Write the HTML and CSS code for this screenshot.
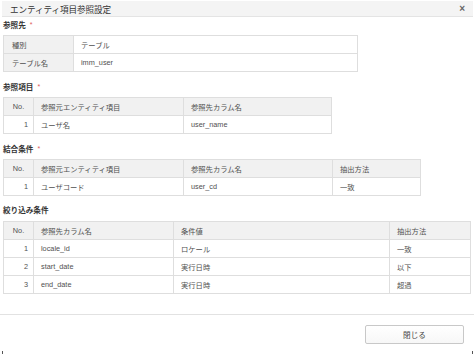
FILE: index.html
```html
<!DOCTYPE html>
<html lang="ja">
<head>
<meta charset="utf-8">
<title>エンティティ項目参照設定</title>
<link rel="stylesheet" href="styles.css">
</head>
<body>
<div class="dialog">
  <div class="titlebar">
    <span class="title">エンティティ項目参照設定</span>
    <span class="close">×</span>
  </div>
  <div class="content">
    <div class="section first">
      <div class="label">参照先<span class="req">*</span></div>
      <table class="grid t1">
        <colgroup><col class="c-lbl"><col></colgroup>
        <tr><th class="side">種別</th><td>テーブル</td></tr>
        <tr><th class="side">テーブル名</th><td>imm_user</td></tr>
      </table>
    </div>
    <div class="section">
      <div class="label">参照項目<span class="req">*</span></div>
      <table class="grid t2">
        <colgroup><col class="c-no"><col class="c-150"><col></colgroup>
        <tr class="head"><th class="no">No.</th><th>参照元エンティティ項目</th><th>参照先カラム名</th></tr>
        <tr><td class="num">1</td><td>ユーザ名</td><td>user_name</td></tr>
      </table>
    </div>
    <div class="section">
      <div class="label">結合条件<span class="req">*</span></div>
      <table class="grid t3">
        <colgroup><col class="c-no"><col class="c-150"><col class="c-149"><col></colgroup>
        <tr class="head"><th class="no">No.</th><th>参照元エンティティ項目</th><th>参照先カラム名</th><th>抽出方法</th></tr>
        <tr><td class="num">1</td><td>ユーザコード</td><td>user_cd</td><td>一致</td></tr>
      </table>
    </div>
    <div class="section">
      <div class="label">絞り込み条件</div>
      <table class="grid t4">
        <colgroup><col class="c-no"><col class="c-140"><col class="c-216"><col></colgroup>
        <tr class="head"><th class="no">No.</th><th>参照先カラム名</th><th>条件値</th><th>抽出方法</th></tr>
        <tr><td class="num">1</td><td>locale_id</td><td>ロケール</td><td>一致</td></tr>
        <tr><td class="num">2</td><td>start_date</td><td>実行日時</td><td>以下</td></tr>
        <tr><td class="num">3</td><td>end_date</td><td>実行日時</td><td>超過</td></tr>
      </table>
    </div>
  </div>
  <div class="footer">
    <button class="btn" type="button">閉じる</button>
  </div>
  <div class="edge"></div>
</div>
</body>
</html>
```

FILE: styles.css
```css
html, body {
  margin: 0;
  padding: 0;
  background: #ffffff;
}
body {
  font-family: "Liberation Sans", "Noto Sans CJK JP", sans-serif;
  color: #444;
  width: 474px;
  height: 354px;
  overflow: hidden;
}
.dialog {
  width: 474px;
}
.titlebar {
  margin: 1px 1px 0 2px;
  height: 15px;
  background: #f4f4f4;
  border-bottom: 1px solid #e4e4e4;
  display: flex;
  align-items: center;
  justify-content: space-between;
  padding: 0 8px 0 8px;
}
.title {
  font-size: 8.6px;
  color: #333;
  letter-spacing: -0.1px;
}
.close {
  font-size: 10px;
  color: #666;
  font-weight: bold;
  line-height: 1;
}
.content {
  padding: 0 3px;
}
.section {
  margin-top: 8px;
}
.section.first {
  margin-top: 1px;
}
.label {
  height: 14px;
  line-height: 14px;
  font-size: 7.6px;
  font-weight: bold;
  color: #333;
  margin-bottom: 3px;
}
.req {
  color: #e05a5a;
  font-weight: normal;
  font-size: 7px;
  margin-left: 4px;
  vertical-align: 1px;
}
.grid {
  border-collapse: collapse;
  table-layout: fixed;
  font-size: 7.3px;
  color: #505050;
}
.grid tr {
  height: 18px;
}
.grid th, .grid td {
  border: 1px solid #dedede;
  padding: 0 6px 0 7px;
  text-align: left;
  font-weight: normal;
  white-space: nowrap;
  overflow: hidden;
}
.grid th.side {
  background: #f1f1f1;
  padding-left: 8px;
}
.grid tr.head th {
  background: #f1f1f1;
}
.grid th.no {
  text-align: center;
  padding: 0;
}
.grid td.num {
  text-align: right;
  padding-right: 5px;
}
.t1 { width: 355px; }
.t2 { width: 329px; }
.t3 { width: 418px; }
.t4 { width: 468px; }
.c-lbl { width: 70px; }
.c-no { width: 30px; }
.c-150 { width: 150px; }
.c-149 { width: 149px; }
.c-140 { width: 140px; }
.c-216 { width: 216px; }
.footer {
  margin-top: 20px;
  border-top: 1px solid #e2e2e2;
  padding: 10px 10px 0 0;
  display: flex;
  justify-content: flex-end;
}
.btn {
  width: 99px;
  height: 19px;
  border: 1px solid #c8c8c8;
  border-radius: 2px;
  background: linear-gradient(#ffffff, #f7f7f7);
  font-family: "Liberation Sans", "Noto Sans CJK JP", sans-serif;
  font-size: 7.6px;
  color: #444;
  padding: 0;
}
.edge {
  margin: 7px 1px 0 2px;
  height: 4px;
  border-left: 1px solid #555;
  border-right: 1px solid #555;
}
```
